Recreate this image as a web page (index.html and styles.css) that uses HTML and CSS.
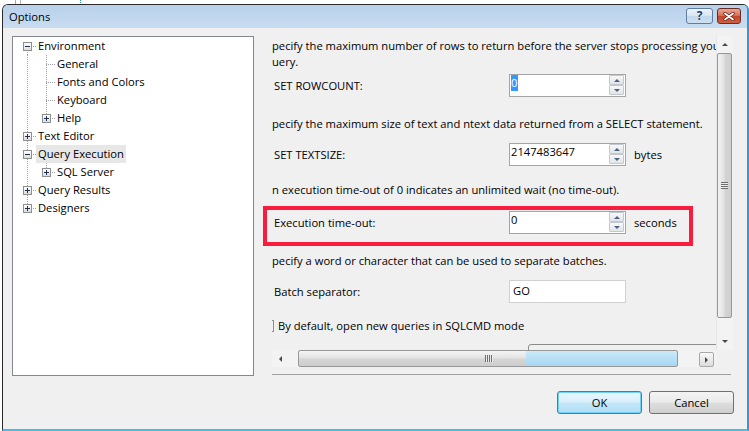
FILE: index.html
```html
<!DOCTYPE html>
<html>
<head>
<meta charset="utf-8">
<title>Options</title>
<link rel="stylesheet" href="styles.css">
</head>
<body>
<div class="desk"><span class="d1"></span><span class="d2"></span><span class="dteal"></span></div>
<div class="win">
  <div class="titlebar">
    <span class="title">Options</span>
    <span class="tb-help">?</span>
    <span class="tb-close"><svg width="12" height="9" viewBox="0 0 12 9"><path d="M2 1.5 L10 7.5 M10 1.5 L2 7.5" stroke="#5a1a12" stroke-width="3.2" stroke-linecap="round"/><path d="M2 1.5 L10 7.5 M10 1.5 L2 7.5" stroke="#fff" stroke-width="1.8" stroke-linecap="round"/></svg></span>
  </div>
  <div class="client">
    <div class="main">
      <div class="tree">
        <div class="node"><span class="c c-first"><i class="exp minus"></i></span><span class="lbl">Environment</span></div>
        <div class="node"><span class="c c-v"></span><span class="c c-tee"></span><span class="lbl">General</span></div>
        <div class="node"><span class="c c-v"></span><span class="c c-tee"></span><span class="lbl">Fonts and Colors</span></div>
        <div class="node"><span class="c c-v"></span><span class="c c-tee"></span><span class="lbl">Keyboard</span></div>
        <div class="node"><span class="c c-v"></span><span class="c c-elbow"><i class="exp plus"></i></span><span class="lbl">Help</span></div>
        <div class="node"><span class="c c-tee"><i class="exp plus"></i></span><span class="lbl">Text Editor</span></div>
        <div class="node"><span class="c c-tee"><i class="exp minus"></i></span><span class="lbl sel-node">Query Execution</span></div>
        <div class="node"><span class="c c-v"></span><span class="c c-elbow"><i class="exp plus"></i></span><span class="lbl">SQL Server</span></div>
        <div class="node"><span class="c c-tee"><i class="exp plus"></i></span><span class="lbl">Query Results</span></div>
        <div class="node"><span class="c c-elbow"><i class="exp plus"></i></span><span class="lbl">Designers</span></div>
      </div>
      <div class="pane">
        <div class="pane-top">
          <div class="view">
            <p class="t">pecify the maximum number of rows to return before the server stops processing you</p>
            <p class="t">uery.</p>
            <div class="row r1"><span class="lab">SET ROWCOUNT:</span><span class="spin"><span class="val"><span class="sel">0</span></span><span class="spb"><i class="up"></i><i class="dn"></i></span></span></div>
            <p class="t p3">pecify the maximum size of text and ntext data returned from a SELECT statement.</p>
            <div class="row r2"><span class="lab">SET TEXTSIZE:</span><span class="spin"><span class="val">2147483647</span><span class="spb"><i class="up"></i><i class="dn"></i></span></span><span class="unit">bytes</span></div>
            <p class="t p4">n execution time-out of 0 indicates an unlimited wait (no time-out).</p>
            <div class="row r3"><span class="lab">Execution time-out:</span><span class="spin"><span class="val">0</span><span class="spb"><i class="up"></i><i class="dn"></i></span></span><span class="unit">seconds</span></div>
            <p class="t p5">pecify a word or character that can be used to separate batches.</p>
            <div class="row r4"><span class="lab">Batch separator:</span><span class="tb">GO</span></div>
            <p class="t p6"><span class="chk"></span>By default, open new queries in SQLCMD mode</p>
            <div class="grp"></div>
          </div>
          <div class="vscroll">
            <span class="varr"><i class="tri-up"></i></span>
            <span class="vthumb"><i class="gv"></i></span>
            <span class="varr down"><i class="tri-dn"></i></span>
          </div>
        </div>
        <div class="hscroll">
          <span class="harr"><i class="tri-l"></i></span>
          <span class="hthumb"><i class="gh"></i></span>
          <span class="harr right"><i class="tri-r"></i></span>
        </div>
        <div class="sep"></div>
        <div class="annot"></div>
      </div>
    </div>
    <div class="buttons">
      <button class="btn ok">OK</button>
      <button class="btn">Cancel</button>
    </div>
  </div>
</div>
</body>
</html>
```

FILE: styles.css
```css
* { box-sizing: border-box; }
html, body { margin: 0; padding: 0; }
body {
  width: 749px; height: 431px; overflow: hidden;
  background: #fff;
  font-family: "Open Sans", "Noto Sans", sans-serif;
  font-size: 11.2px; color: #000;
}
.desk { display: flex; height: 4px; }
.d1 { margin-left: 15px; width: 1px; background: #a9a9a9; }
.d2 { margin-left: 4px; width: 1px; background: #b5b5b5; }
.dteal { margin-left: 59px; width: 1px; background: repeating-linear-gradient(#2f9c9c 0 1px, transparent 1px 2px); }

.win {
  margin-left: 2px; width: 747px; height: 427px;
  border: 1px solid #2a2a2a; border-right: 2px solid #3796d6; border-bottom: 2px solid #3fc0ec;
  border-radius: 6px 6px 0 0;
  background: #f0f0f0; overflow: hidden;
  display: flex; flex-direction: column;
}
.titlebar {
  height: 23px; flex: none; display: flex; align-items: flex-start;
  background: linear-gradient(#b9d1ea, #c8dcf1);
}
.title { padding-left: 6px; line-height: 23px; }
.tb-help {
  margin-left: auto; margin-top: 3px; width: 27px; height: 16px;
  border: 1px solid #5f7d9e; border-radius: 3px;
  background: linear-gradient(#eef4fb, #d6e5f3 50%, #c3d7ec 50%, #cde0f2);
  color: #213d68; font-weight: bold; font-size: 12px; line-height: 14px; text-align: center;
  text-shadow: 0 0 1px #fff;
}
.tb-close {
  margin-left: 4px; margin-right: 6px; margin-top: 3px; width: 24px; height: 16px;
  border: 1px solid #6b2c26; border-radius: 3px;
  background: linear-gradient(#eaa999, #d76a50 50%, #c5432a 50%, #d2603f);
  display: flex; align-items: center; justify-content: center;
}
.tb-close svg { display: block; }

.client { flex: 1; display: flex; flex-direction: column; padding: 8px 13px 0 9px; }
.main { display: flex; height: 340px; flex: none; }

/* tree */
.tree {
  --vd: repeating-linear-gradient(to bottom, #a0a0a0 0 1px, transparent 1px 2px);
  --hd: repeating-linear-gradient(to right, #a0a0a0 0 1px, transparent 1px 2px);
  width: 242px; height: 340px; flex: none;
  border: 1px solid #828790; background: #fff;
}
.node { display: flex; height: 18px; padding-left: 5px; line-height: 18px; white-space: nowrap; }
.c { width: 19px; height: 18px; flex: none; display: flex; align-items: flex-start; background-repeat: no-repeat; }
.c-v { background-image: var(--vd); background-size: 1px 18px; background-position: 9px 0; }
.c-tee { background-image: var(--vd), var(--hd); background-size: 1px 18px, 10px 1px; background-position: 9px 0, 9px 9px; }
.c-elbow { background-image: var(--vd), var(--hd); background-size: 1px 9px, 10px 1px; background-position: 9px 0, 9px 9px; }
.c-first { background-image: var(--vd), var(--hd); background-size: 1px 9px, 10px 1px; background-position: 9px 9px, 9px 9px; }
.exp { display: block; width: 9px; height: 9px; margin: 5px 0 0 5px; border: 1px solid #8e8f8f; }
.minus {
  background:
    linear-gradient(#1f2f4f, #1f2f4f) 1px 3px / 5px 1px no-repeat,
    linear-gradient(#ffffff, #dcdcdc);
}
.plus {
  background:
    linear-gradient(#1f2f4f, #1f2f4f) 1px 3px / 5px 1px no-repeat,
    linear-gradient(#1f2f4f, #1f2f4f) 3px 1px / 1px 5px no-repeat,
    linear-gradient(#ffffff, #dcdcdc);
}
.lbl { margin-left: -1px; padding: 0 2px; }
.sel-node { background: #e7e7e7; }

/* right pane */
.pane { position: relative; margin-left: 18px; width: 461px; }
.pane-top { display: flex; height: 314px; }
.view { width: 444px; height: 314px; overflow: hidden; padding-top: 2px; white-space: nowrap; }
.t { margin: 0; height: 16px; line-height: 16px; }
.row { display: flex; align-items: center; height: 23px; }
.r1 { margin-top: 4px; }
.p3 { margin-top: 19px; }
.r2 { margin-top: 11px; }
.p4 { margin-top: 16px; }
.r3 { margin-top: 13px; }
.p5 { margin-top: 19px; }
.r4 { margin-top: 11px; }
.p6 { margin-top: 15px; display: flex; align-items: center; }
.lab { width: 237px; padding-left: 2px; flex: none; }
.spin { display: flex; width: 117px; height: 23px; border: 1px solid #a5a5a5; background: #fff; flex: none; }
.val { flex: 1; padding-left: 1px; line-height: 16px; }
.sel { display: inline-block; background: #3399ff; color: #fff; padding-right: 1px; }
.spb { width: 15px; display: flex; flex-direction: column; margin-right: 1px; }
.spb i {
  height: 10px; border: 1px solid #c2c8d0; border-radius: 1px;
  background: linear-gradient(#f8f8f8, #e2e4e7);
  display: flex; align-items: center; justify-content: center;
}
.spb .up::after { content: ""; border-left: 3px solid transparent; border-right: 3px solid transparent; border-bottom: 3px solid #4b6284; }
.spb .dn::after { content: ""; border-left: 3px solid transparent; border-right: 3px solid transparent; border-top: 3px solid #4b6284; }
.unit { margin-left: 8px; }
.tb { width: 117px; height: 23px; border: 1px solid #d0d0d0; background: #fff; padding: 2px 3px; line-height: 16px; }
.chk { width: 2px; height: 12px; border: 1px solid #8e8f8f; border-left: none; margin-right: 4px; flex: none; }
.grp { margin-left: 256px; margin-top: 10px; width: 300px; height: 40px; border: 1px solid #8c8c8c; border-radius: 3px; }

/* vertical scrollbar */
.vscroll { width: 17px; height: 314px; display: flex; flex-direction: column; background: #f3f3f3; border-left: 1px solid #e6e6e6; }
.varr { height: 17px; flex: none; display: flex; align-items: center; justify-content: center; }
.varr.down { margin-top: auto; }
.vthumb {
  height: 265px; flex: none; margin-right: 1px;
  border: 1px solid #979797; border-radius: 2px;
  background: linear-gradient(to right, #f2f2f2, #e2e2e2 45%, #d4d4d4 55%, #cecece);
  display: flex; align-items: center; justify-content: center;
}
.gv { width: 7px; height: 7px; background: repeating-linear-gradient(#6e6e6e 0 1px, #ececec 1px 2px); }
.tri-up { border-left: 3px solid transparent; border-right: 3px solid transparent; border-bottom: 3px solid #4a4a4a; }
.tri-dn { border-left: 3px solid transparent; border-right: 3px solid transparent; border-top: 3px solid #4a4a4a; }
.tri-l { border-top: 3px solid transparent; border-bottom: 3px solid transparent; border-right: 3px solid #4a4a4a; }
.tri-r { border-top: 3px solid transparent; border-bottom: 3px solid transparent; border-left: 3px solid #4a4a4a; }

/* horizontal scrollbar */
.hscroll { display: flex; width: 444px; height: 17px; background: #f3f3f3; }
.harr { width: 17px; flex: none; display: flex; align-items: center; justify-content: center; }
.harr.right {
  margin-left: auto; margin-right: 2px; margin-top: 2px; width: 15px; height: 15px;
  border: 1px solid #a8a8a8; border-radius: 2px; background: linear-gradient(#f8f8f8, #dddddd);
}
.hthumb {
  margin-left: 9px; width: 380px; height: 17px; flex: none;
  border: 1px solid #979797; border-radius: 2px;
  background:
    linear-gradient(#cbe9f9, #a6d7f3) right / 151px 100% no-repeat,
    linear-gradient(#f4f4f4, #e4e4e4 45%, #d5d5d5 55%, #cdcdcd);
  display: flex; align-items: center; padding-left: 186px;
}
.gh { width: 8px; height: 7px; background: repeating-linear-gradient(to right, #6e6e6e 0 1px, #ececec 1px 2px); }
.sep { margin-top: 7px; width: 459px; height: 1px; background: #a0a0a0; }
.annot { position: absolute; left: -9px; top: 170px; width: 430px; height: 40px; border: 4px solid #f81c3f; }

/* buttons */
.buttons { display: flex; justify-content: flex-end; gap: 7px; margin-top: 15px; }
.btn {
  width: 85px; height: 23px; padding: 0; font: inherit; color: #000;
  border: 1px solid #707070; border-radius: 3px;
  background: linear-gradient(#f3f3f3, #ebebeb 45%, #dddddd 55%, #cfcfcf);
}
.btn.ok {
  border-color: #3c7fb1;
  box-shadow: inset 0 0 0 1px #6fd3f7;
  background: linear-gradient(#eaf6fd, #d9f0fc 45%, #c2e6f9 55%, #b2ddf4);
}
```
